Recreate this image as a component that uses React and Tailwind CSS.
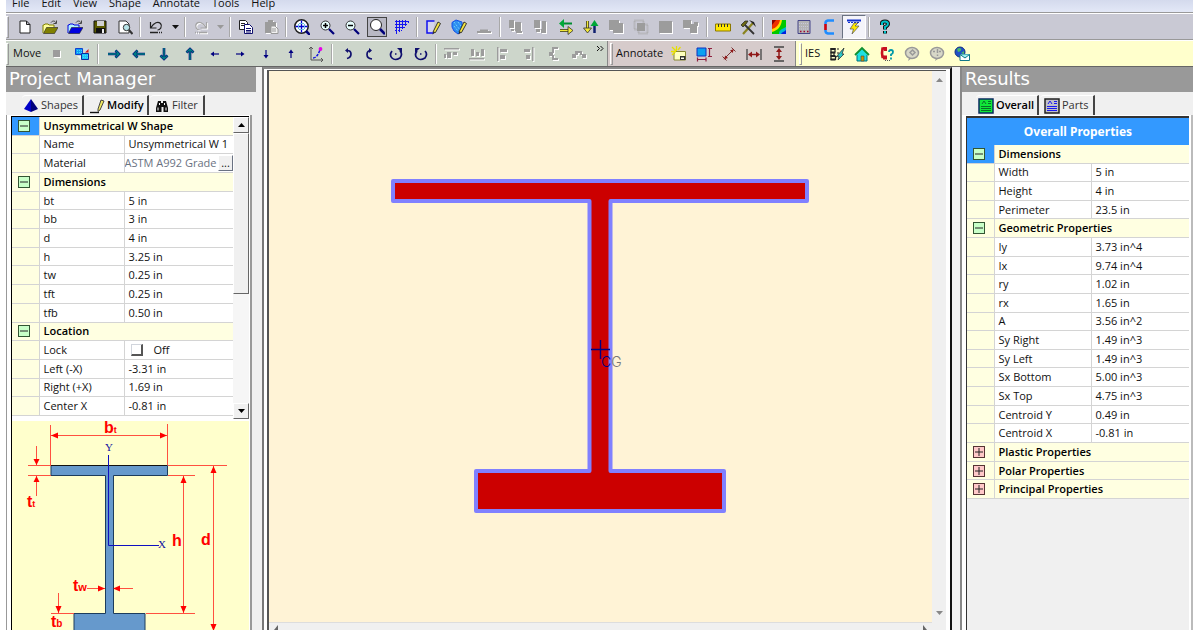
import { useState } from "react";
import clsx from "clsx";

const MENUS = ["File", "Edit", "View", "Shape", "Annotate", "Tools", "Help"];

// Property grid data, grouped by section
const SHAPE_SECTIONS = [
  {
    title: "Unsymmetrical W Shape",
    open: true,
    rows: [
      { label: "Name", value: "Unsymmetrical W 1" },
      { label: "Material", value: "ASTM A992 Grade", type: "picker" },
    ],
  },
  {
    title: "Dimensions",
    open: true,
    rows: [
      { label: "bt", value: "5 in" },
      { label: "bb", value: "3 in" },
      { label: "d", value: "4 in" },
      { label: "h", value: "3.25 in" },
      { label: "tw", value: "0.25 in" },
      { label: "tft", value: "0.25 in" },
      { label: "tfb", value: "0.50 in" },
    ],
  },
  {
    title: "Location",
    open: true,
    rows: [
      { label: "Lock", value: "Off", type: "check" },
      { label: "Left (-X)", value: "-3.31 in" },
      { label: "Right (+X)", value: "1.69 in" },
      { label: "Center X", value: "-0.81 in" },
    ],
  },
];

const RESULT_SECTIONS = [
  {
    title: "Dimensions",
    open: true,
    rows: [
      { label: "Width", value: "5 in" },
      { label: "Height", value: "4 in" },
      { label: "Perimeter", value: "23.5 in" },
    ],
  },
  {
    title: "Geometric Properties",
    open: true,
    rows: [
      { label: "Iy", value: "3.73 in^4" },
      { label: "Ix", value: "9.74 in^4" },
      { label: "ry", value: "1.02 in" },
      { label: "rx", value: "1.65 in" },
      { label: "A", value: "3.56 in^2" },
      { label: "Sy Right", value: "1.49 in^3" },
      { label: "Sy Left", value: "1.49 in^3" },
      { label: "Sx Bottom", value: "5.00 in^3" },
      { label: "Sx Top", value: "4.75 in^3" },
      { label: "Centroid Y", value: "0.49 in" },
      { label: "Centroid X", value: "-0.81 in" },
    ],
  },
  { title: "Plastic Properties", open: false, rows: [] },
  { title: "Polar Properties", open: false, rows: [] },
  { title: "Principal Properties", open: false, rows: [] },
];

const folder = (dark, light) => (
  <>
    <path d="M1 14V6h1l1-1h3l1 1h5v2" fill={light} stroke={dark} />
    <path d="M1.5 14.5 4.5 8.5H16L12.5 14.5z" fill={dark} stroke="#222" strokeWidth=".6" />
    <path d="M9 3.5c1.5-2 4-2 5 .5M14.5 1.5v3h-3" stroke="#444" fill="none" />
  </>
);

const lens = (
  <>
    <circle cx="6.5" cy="6.5" r="4.500" fill="#e8ffff" stroke="#333" />
    <path d="m10 10 5 5" stroke="#00007a" strokeWidth="2.200" />
  </>
);

const pencil = (
  <>
    <path d="m8 13 5-10 2.5 1.5-5 9z" fill="#f5e642" stroke="#222" strokeWidth=".9" />
    <path d="m8 13-.5 2.5L10 13.8z" fill="#222" />
  </>
);

// Thick arrow pointing right, rotated for the other directions
const bigArrow = (angle) => (
  <g transform={`rotate(${angle} 8 8)`}>
    <path d="M2 8h11M9.500 4.500 13 8l-3.500 3.500" stroke="#000080" strokeWidth="2.600" fill="none" />
    <path d="M2 8h11M9.500 4.500 13 8l-3.500 3.500" stroke="#008080" strokeWidth="1.400" fill="none" />
  </g>
);

const smallArrow = (angle) => (
  <g transform={`rotate(${angle} 8 8)`}>
    <path d="M4 8h6" stroke="#000080" strokeWidth="1.2" />
    <path d="m9 5.500 3.500 2.500L9 10.500z" fill="#000080" />
  </g>
);

// Disabled glyphs are a grey shape over a white one shifted by a pixel
const disabled = (d) => (
  <>
    <path d={d} fill="#fff" transform="translate(1 1)" />
    <path d={d} fill="#9c9c9c" />
  </>
);

const undoShape = (color) => (
  <>
    <path d="M2.5 3v6h6M3 8.5C6 3.5 10 2 12.5 4.5c2.5 3-.5 6.500-3 6.500" fill="none" stroke={color} strokeWidth="1.2" />
    <path d="M2 13.5h8" stroke={color} strokeWidth="1.5" />
    <path d="M11 13.5h4" stroke={color} strokeWidth="1.5" strokeDasharray="1 1" />
  </>
);

const clock = (d, head) => (
  <>
    <path d={d} fill="none" stroke="#10106e" strokeWidth="1.700" />
    <path d={head} fill="#10106e" />
  </>
);

const ICONS = {
  new: <path d="M3 2h6.500L13 5.500V14H3zM9.500 2v3.500H13" fill="#fff" stroke="#222" />,
  open: folder("#808000", "#ffff99"),
  openBlue: folder("#0000e0", "#b0f0ff"),
  save: (
    <>
      <path d="M2 2h12v12H2z" fill="#5c5c00" stroke="#111" />
      <path d="M5 2h7v5H5z" fill="#d2d2d2" />
      <path d="M4 9h9v5H4z" fill="#111" />
      <path d="M10 10h2v4h-2z" fill="#eee" />
    </>
  ),
  preview: (
    <>
      <path d="M2 2h7l3 3v9H2z" fill="#fff" stroke="#333" />
      <circle cx="9.5" cy="8.5" r="3.200" fill="#b8e4e8" stroke="#333" />
      <path d="m12 11 3.500 4" stroke="#333" strokeWidth="2" />
    </>
  ),
  undo: undoShape("#222"),
  redo: (
    <>
      <g transform="translate(17 1) scale(-1 1)">{undoShape("#fff")}</g>
      <g transform="translate(16 0) scale(-1 1)">{undoShape("#a4a4a4")}</g>
    </>
  ),
  copy: (
    <>
      <path d="M1.500 1.500h6l2 2v7h-8z" fill="#fff" stroke="#222" />
      <path d="M3 4.500h4M3 6.500h4" stroke="#222" />
      <path d="M6.500 5.500h5l3 3v6h-8z" fill="#fff" stroke="#10106e" />
      <path d="M8 9.500h5M8 11.500h5M8 13h5" stroke="#10106e" />
    </>
  ),
  paste: (
    <>
      {disabled("M2 3h3V1h5v2h3v4H8v7H2z")}
      <path d="M8 7h4l3 3v4.500H8z" fill="#f2f2f2" stroke="#999" />
      <path d="M9 10h4M9 12h4" stroke="#999" />
    </>
  ),
  zoomFit: (
    <>
      <circle cx="7.5" cy="7.5" r="6.700" fill="#fff" stroke="#222" strokeWidth="1.600" />
      <path d="M1.500 7.500h12M7.500 1.500v12" stroke="#0000d0" strokeWidth="1.300" />
      <path d="M4.500 5v5M10.500 5v5M5 4.500h5M5 10.500h5" stroke="#6bbbe0" />
      <path d="m12 12 4 4" stroke="#00007a" strokeWidth="2.500" />
    </>
  ),
  zoomIn: (
    <>
      {lens}
      <path d="M4 6.500h5M6.500 4v5" stroke="#000" strokeWidth="1.500" />
    </>
  ),
  zoomOut: (
    <>
      {lens}
      <path d="M4 6.500h5" stroke="#000" strokeWidth="1.500" />
    </>
  ),
  zoomBox: (
    <>
      <circle cx="7" cy="6" r="5.500" fill="#fff" stroke="#222" />
      <path d="m11 10 5 5" stroke="#00007a" strokeWidth="2.600" />
    </>
  ),
  grid: (
    <>
      <path d="M1 2.500h14M1 5.500h12M1 8.500h10M2.500 1v14M5.500 1v12M8.500 1v9M11.500 1v6" stroke="#1414f0" />
      <path d="M1 11.500h7M14.500 2v3" stroke="#1414f0" strokeDasharray="2 1" />
    </>
  ),
  sketch: (
    <>
      <path d="M9.500 2H2v12h6" fill="#d4d4ee" stroke="#1010f0" strokeWidth="1.500" />
      {pencil}
    </>
  ),
  solid: (
    <>
      <path d="M1 3.500 5 1l6 2v8l-4 4-4-3-2-4z" fill="#2c8df0" stroke="#1450e8" />
      <path d="m3 3 6 8M3 7l4 5M7 3l3 4" stroke="#7fe0ff" strokeDasharray="1 1" />
      {pencil}
    </>
  ),
  plate: disabled("M1 12h14v2H1zM4 10.500h8V12H4z"),
  bringFront: disabled("M1 1h5v8H1zM7 3h6v9H7zM3 10h3v2H3zM8 12h6v2H8z"),
  sendBack: disabled("M1 1h6v8H1zM9 2h4v12H8v-4h1zM3 10h4v3H3z"),
  flipH: (
    <>
      <path d="M14 4.500H5" stroke="#008c30" strokeWidth="2" />
      <path d="M6 0v9L1 4.500z" fill="#00a838" />
      <path d="M2 11.500h9" stroke="#222" strokeWidth="3" />
      <path d="M2 11.500h9" stroke="#f2e838" strokeWidth="1.600" />
      <path d="M10 7.500v8l5-4z" fill="#f2e838" stroke="#333" strokeWidth=".8" />
    </>
  ),
  flipV: (
    <>
      <path d="M4.500 2v8" stroke="#222" strokeWidth="3" />
      <path d="M4.500 2v8" stroke="#f2e838" strokeWidth="1.600" />
      <path d="M.5 9h8l-4 5z" fill="#f2e838" stroke="#333" strokeWidth=".8" />
      <path d="M11.500 14V6" stroke="#102070" strokeWidth="2.500" />
      <path d="M7.500 7h8l-4-6z" fill="#00a838" />
    </>
  ),
  union: disabled("M1 1h10v3h4v10H5v-3H1z"),
  intersect: (
    <>
      <path d="M1.500 1.500h9v9h-9zM5.500 5.500h9v9h-9z" fill="none" stroke="#a8a8a8" strokeWidth="2" strokeDasharray="1 1" />
      <path d="M4 4h8v8H4z" fill="#9c9c9c" />
    </>
  ),
  subtract: disabled("M1 2h13v12H1z"),
  split: disabled("M0 1h8v4h3V3h4v4h-1v7H7V9H0z"),
  ruler: (
    <>
      <path d="M.5 5h15v7H.5z" fill="#ffe800" stroke="#8c7800" />
      <path d="M3.500 5v3M6.500 5v3M9.500 5v3M12.500 5v3" stroke="#333" />
    </>
  ),
  tools: (
    <>
      <path d="m3 15 10-11" stroke="#8a8420" strokeWidth="2.200" />
      <path d="m5 6 9 9" stroke="#333" strokeWidth="1.800" />
      <path d="M1 6 5 2h3L6 5 3 8z" fill="#6c6814" stroke="#222" strokeWidth=".7" />
      <path d="m9 1 5 2 2 5-2-2-3-3z" fill="#222" />
    </>
  ),
  rainbow: (
    <>
      <path d="M1 1h14v14H1z" fill="#00c800" />
      <path d="M1 1h10C10 8 7 11 1 13z" fill="#ffe000" />
      <path d="M1 1h8C8 6 5 9 1 10z" fill="#f03000" />
      <path d="M1 1h4L1 6z" fill="#8c0000" />
      <path d="M15 8v7H8c0-4 3-5 7-7z" fill="#00b8d8" />
      <path d="M15 11v4h-5c1-2 3-2 5-4z" fill="#0020e0" />
    </>
  ),
  dotted: (
    <>
      <path d="M2 1.500h12v13H2z" fill="#b4b4b4" stroke="#444488" />
      <path d="M3 4.500h10M3 7.500h10M3 10h10" stroke="#c8c8dc" strokeDasharray="1 1" />
      <path d="M4 12.500h9" stroke="#a00030" strokeWidth="1.500" strokeDasharray="1.500 2" />
    </>
  ),
  channel: (
    <>
      <path d="M13 1.500H7Q4.500 2 4.500 4v8q0 2 2.500 2.500h6" fill="none" stroke="#1e8cff" strokeWidth="2.500" />
      <path d="M4.500 5v6" stroke="#e00000" strokeWidth="2.500" />
    </>
  ),
  flash: (
    <>
      <path d="M1 1.500h14" stroke="#1030d0" strokeWidth="2" />
      <path d="M2 3.500h12" stroke="#1030d0" strokeDasharray="2 1" />
      <path d="M8 4h4l-3 3h4l-7 8 1.500-5H4z" fill="#ffe800" stroke="#555" strokeWidth=".7" />
    </>
  ),
  help: (
    <>
      <path d="M5 6V4q0-1.500 3-1.500T11 5q0 1.500-3 3v2.500M8 12v2.500" fill="none" stroke="#111" strokeWidth="4" />
      <path d="M5 6V4q0-1.500 3-1.500T11 5q0 1.500-3 3v2.500M8 12v2.500" fill="none" stroke="#00c0c8" strokeWidth="2" />
    </>
  ),
  stop: disabled("M4 4h7v7H4z"),
  copyShape: (
    <>
      <path d="M1.500 2.500h7v6h-7z" fill="#0d9cf5" stroke="#1040d0" />
      <path d="M7.500 7.500h7v6h-7z" fill="#18c4f5" stroke="#0d2ca0" />
      <path d="M3 4.500h5M3 6.500h5M9 9.500h5M9 11.500h5" stroke="#40d8ff" strokeDasharray="1 1" />
      <path d="M10 2h4v4h-4z" fill="#c8d8e8" />
      <path d="M11 6.500 14.500 3v3.500z" fill="#d81818" />
      <path d="M3 10h4v4z" fill="#f4f4f4" />
    </>
  ),
  right: bigArrow(0),
  left: bigArrow(180),
  down: bigArrow(90),
  up: bigArrow(270),
  nudgeLeft: smallArrow(180),
  nudgeRight: smallArrow(0),
  nudgeDown: smallArrow(90),
  nudgeUp: smallArrow(270),
  moveTo: (
    <>
      <path d="M3 1v13h12M1 3l2-2 2 2M13 12l2 2-2 2" fill="none" stroke="#555" />
      <path d="M5 12q4 0 7-8" fill="none" stroke="#1414e0" strokeWidth="1.500" strokeDasharray="3 1" />
      <circle cx="12.5" cy="3" r="1.900" fill="#e800e8" />
    </>
  ),
  rotateA: clock("M8 4.500q4 0 4 3.500t-4 4.500", "M9 2 6 4.500 9 7z"),
  rotateB: clock("M7 4.500q-4 0-4 4T8 13", "M5 2l3 2.500L5 7z"),
  rotateC: clock("M4 5q-3 4 0 7t8 0q3-4 0-7M7 8h1.500", "M9 2h5v5z"),
  rotateD: clock("M4 5q-3 4 0 7t8 0q3-4 0-7M7 8h1.500", "M7 2H2v5z"),
  alignTop: disabled("M0 2h15v1.500H0zM3 6h4v6H3zM9 6h4v3H9zM0 8h2v4H0z"),
  alignBottom: disabled("M0 12h15v1.500H0zM2 3h3v7H2zM7 6h3v4H7zM12 3h3v7h-3z"),
  alignLeft: disabled("M2 1h1.500v14H2zM5 3h7v3H5zM5 9h5v4H5z"),
  alignRight: disabled("M12 1h1.500v14H12zM4 3h6v3H4zM6 9h4v4H6z"),
  centerH: disabled("M6 1h6v2H8v4H7v2h1v3h4v2H6v-4H3V6h3z"),
  centerV: disabled("M1 8h3V5h7v3h4v4h-4V9H9V7H7v2H5v3H1z"),
  note: (
    <>
      <path d="M4 5.500h10.500v8.500H3V8z" fill="#ffffc0" stroke="#888830" />
      <path d="M9 10h5.500v4H9z" fill="#333" />
      <path d="M10 11.500h3v1.500h-3z" fill="#ffe" />
      <path d="M1 1l4 4M5.500 0v5M0 5.500h5M1 9l3-3M9.500 1 7 4" stroke="#e8e000" strokeWidth="1.300" />
    </>
  ),
  boxDims: (
    <>
      <path d="M1 2h9v8H1z" fill="#0ca0f0" stroke="#1030c0" />
      <path d="M13.500 3v7M12 2.500h4M12 10.500h4M1 13.500h9M1.500 11.500v4M10 11.500v4" stroke="#902040" strokeWidth="1.200" />
    </>
  ),
  dimAligned: (
    <>
      <path d="m3 13 9-9M10.500 1.500l4 4M1.500 10.500l4 4" stroke="#773333" />
      <path d="m2.500 13.500 2-4 2.500 2.500zM13 3 9 4.500 11.500 7z" fill="#901818" />
    </>
  ),
  dimH: (
    <>
      <path d="M1 3v11M15 3v11" stroke="#444" strokeWidth="1.300" />
      <path d="M4 8.500h8" stroke="#901818" strokeWidth="1.500" />
      <path d="M2 8.500 6 5.500v6zM14 8.500l-4-3v6z" fill="#901818" />
    </>
  ),
  dimV: (
    <>
      <path d="M3 1h10M3 15h10" stroke="#444" strokeWidth="1.300" />
      <path d="M8 4v8" stroke="#901818" strokeWidth="1.500" />
      <path d="M8 2 5 6h6zM8 14l-3-4h6z" fill="#901818" />
    </>
  ),
  iesLogo: (
    <>
      <path d="M1.500 3h5M1.500 6.500h5M1.500 10h5M1.500 13.500h5" stroke="#222" strokeWidth="1.800" />
      <path d="M2 2v12M6 2v4M5 7v3M6.500 10v4M8 3h2M8 7h2" stroke="#222" strokeWidth="1.200" />
      <path d="m7 11 8-9-2 6h2l-6 6 1-4z" fill="#30c8c8" stroke="#222" strokeWidth=".7" />
    </>
  ),
  home: (
    <>
      <path d="M3 8h10v7H3z" fill="#20e0e0" stroke="#00707c" />
      <path d="M1 9 8 2l7 7" fill="#20e0e0" stroke="#109030" strokeWidth="1.800" />
      <path d="M7 10h3v5H7z" fill="#c89800" stroke="#444" strokeWidth=".6" />
    </>
  ),
  phone: (
    <>
      <path d="M5.500 2.500H3.500Q2.500 7 3.500 11h2" fill="none" stroke="#c81020" strokeWidth="2.600" />
      <path d="M4 1h4v4H5zM4 9.500h4v4H4z" fill="#c81020" />
      <path d="M6 14.500h5" stroke="#555" strokeDasharray="1 1" />
      <path d="M10 6q0-2 2-2t2 2-2 2.500V10M12 11.500v2" fill="none" stroke="#0098a8" strokeWidth="1.800" />
    </>
  ),
  chatA: (
    <>
      <ellipse cx="8" cy="7" rx="6.500" ry="5.500" fill="#d8d8c8" stroke="#999" strokeWidth="1.500" />
      <path d="m5 12-1 3 4-3" fill="#999" />
      <path d="M8.500 4 11 6.500 8.500 9 6 6.500z" fill="none" stroke="#999" strokeWidth="1.500" />
    </>
  ),
  chatB: (
    <>
      <ellipse cx="8" cy="7" rx="6.500" ry="5.500" fill="#d8d8c8" stroke="#999" strokeWidth="1.500" />
      <path d="m7 12-1 3 4-3" fill="#999" />
      <path d="M8.500 3v4M8.500 8.500V10M4 5.500h2M10 5.500h2" stroke="#999" strokeWidth="1.500" />
    </>
  ),
  mailWeb: (
    <>
      <circle cx="6" cy="6" r="5" fill="#2050c8" stroke="#103080" />
      <path d="M3 3q3-2 4 0t-3 3zM7 7l3-2v3z" fill="#48b868" />
      <path d="M6 8.500h9.500v6H6z" fill="#fff" stroke="#107888" />
      <path d="m6 8.500 5 3.500 4.500-3.500" fill="#a0f0f0" stroke="#107888" />
    </>
  ),
  pyramid: (
    <>
      <path d="M8 1 1 11l7 3z" fill="#0000c8" />
      <path d="m8 1 7 10-7 3z" fill="#00007c" />
    </>
  ),
  modify: (
    <>
      <path d="m9 11 3-9 3 1-4 9-2 1.500z" fill="#f0e860" stroke="#333" strokeWidth=".9" />
      <path d="M1 14.500h9" stroke="#111" strokeWidth="1.400" />
    </>
  ),
  binoculars: (
    <>
      <path d="M4 3h3v2h2V3h3l2 7v4H9.500V9h-2v5H2v-4z" fill="#111" />
      <path d="M4 9.500v3M12 9.500v3M5.500 5v2M10.500 5v2" stroke="#fff" />
    </>
  ),
  reportGreen: (
    <>
      <path d="M1 1h14v14H1z" fill="#10e838" stroke="#0a2a60" strokeWidth="1.500" />
      <path d="M4 6l2-3 2 3M10 3.500h3M10 5.500h3M3 8.500h10M3 10.500h10M3 12.500h10" fill="none" stroke="#087028" />
    </>
  ),
  reportBlue: (
    <>
      <path d="M1 1h14v14H1z" fill="#c0c0c8" stroke="#222" strokeWidth="1.500" />
      <path d="M4 6l2-3 2 3M10 3.500h3M10 5.500h3M3 8.500h10M3 10.500h10M3 12.500h10" fill="none" stroke="#1818f0" />
    </>
  ),
};

function Icon({ name }) {
  return (
    <svg viewBox="0 0 16 16" className="size-4 shrink-0" fill="none" aria-hidden="true">
      {ICONS[name]}
    </svg>
  );
}

function ToolGroup({ icons, className, active, boxed }) {
  return (
    <div className={clsx("flex shrink-0", className)}>
      {icons.map((name) => (
        <button
          key={name}
          type="button"
          aria-label={name}
          className="flex h-6 flex-1 items-center justify-center"
        >
          <span
            className={clsx(
              "flex items-center justify-center",
              active === name && "h-6 w-6 border border-t-gray-500 border-l-gray-500 border-r-white border-b-white bg-[#f4f4fa]",
              boxed === name && "h-5 w-5 border border-[#444] bg-[#b8b8c4]"
            )}
          >
            <Icon name={name} />
          </span>
        </button>
      ))}
    </div>
  );
}

function Divider() {
  return (
    <div className="flex h-5 w-[6px] shrink-0 justify-center">
      <div className="w-[2px] border-l border-[#a8a8a8] bg-white" />
    </div>
  );
}

function Grip({ tall }) {
  return (
    <div
      className={clsx(
        "w-[3px] shrink-0 border border-t-white border-l-white border-r-[#999] border-b-[#999]",
        tall ? "h-[22px]" : "h-5"
      )}
    />
  );
}

function Caret({ muted }) {
  return (
    <button type="button" aria-label="More" className="flex h-6 w-[14px] shrink-0 items-center justify-center">
      <svg viewBox="0 0 7 4" className="h-1 w-[7px]">
        <path d="M0 0h7L3.500 4z" fill={muted ? "#999" : "#111"} />
      </svg>
    </button>
  );
}

function Toolbars() {
  return (
    <>
      <div className="flex h-[27px] items-center border-t border-b border-t-white border-b-[#999] bg-[#c9c9d4]">
        <div className="w-[6px] shrink-0">
          <Grip tall />
        </div>
        <ToolGroup className="w-[125px]" icons={["new", "open", "openBlue", "save", "preview"]} />
        <Divider />
        <ToolGroup className="w-[25px]" icons={["undo"]} />
        <Caret />
        <Divider />
        <ToolGroup className="w-[25px]" icons={["redo"]} />
        <Caret muted />
        <Divider />
        <ToolGroup className="w-[50px]" icons={["copy", "paste"]} />
        <Divider />
        <ToolGroup
          className="w-[125px]"
          icons={["zoomFit", "zoomIn", "zoomOut", "zoomBox", "grid"]}
          boxed="zoomBox"
        />
        <Divider />
        <ToolGroup className="w-[77px]" icons={["sketch", "solid", "plate"]} />
        <Divider />
        <ToolGroup
          className="w-[201px]"
          icons={["bringFront", "sendBack", "flipH", "flipV", "union", "intersect", "subtract", "split"]}
        />
        <Divider />
        <ToolGroup className="w-[50px]" icons={["ruler", "tools"]} />
        <Divider />
        <ToolGroup
          className="w-[100px]"
          icons={["rainbow", "dotted", "channel", "flash"]}
          active="flash"
        />
        <Divider />
        <ToolGroup className="w-[25px]" icons={["help"]} />
      </div>

      <div className="flex h-[27px] border-t border-b border-t-white border-b-[#666] text-[11px]">
        <div className="flex w-[602px] shrink-0 items-center border-r border-[#888] bg-[#cdd6cb]">
          <Grip tall />
          <span className="w-[35px] shrink-0 pl-1">Move</span>
          <ToolGroup className="w-[51px]" icons={["stop", "copyShape"]} />
          <Divider />
          <ToolGroup
            className="w-[228px]"
            icons={["right", "left", "down", "up", "nudgeLeft", "nudgeRight", "nudgeDown", "nudgeUp", "moveTo"]}
          />
          <Divider />
          <ToolGroup className="w-[98px]" icons={["rotateA", "rotateB", "rotateC", "rotateD"]} />
          <Divider />
          <ToolGroup
            className="w-[153px]"
            icons={["alignTop", "alignBottom", "alignLeft", "alignRight", "centerH", "centerV"]}
          />
          <button type="button" aria-label="More move tools" className="flex h-6 flex-1 items-start justify-center pt-1">
            <svg viewBox="0 0 8 6" className="h-[6px] w-2">
              <path d="m1 0 2.500 2.500L1 5M4.500 0 7 2.500 4.500 5" fill="none" stroke="#111" />
            </svg>
          </button>
        </div>
        <div className="flex w-[188px] shrink-0 items-center border-r border-[#888] bg-[#d6cbcb] pl-[2px]">
          <Grip tall />
          <span className="w-[53px] shrink-0 pl-[3px]">Annotate</span>
          <ToolGroup className="w-[126px]" icons={["note", "boxDims", "dimAligned", "dimH", "dimV"]} />
        </div>
        <div className="flex flex-1 items-center bg-[#ffffcc] pl-[3px]">
          <Grip tall />
          <span className="w-[22px] shrink-0 pl-[3px]">IES</span>
          <ToolGroup className="w-[151px]" icons={["iesLogo", "home", "phone", "chatA", "chatB", "mailWeb"]} />
        </div>
      </div>
    </>
  );
}

function ToggleBox({ open, onClick, title }) {
  return (
    <button
      type="button"
      onClick={onClick}
      aria-label={title}
      aria-expanded={open}
      className={clsx(
        "flex size-3 items-center justify-center border",
        open ? "border-[#335533] bg-[#c8ffc8]" : "border-[#553333] bg-[#ffc8c8]"
      )}
    >
      <svg viewBox="0 0 8 8" className="size-2 shrink-0">
        <path d={open ? "M0 4h8" : "M0 4h8M4 0v8"} stroke="#222" strokeWidth="1" />
      </svg>
    </button>
  );
}

function PropertyValue({ row, id }) {
  if (row.type === "picker") {
    return (
      <div className="flex items-center justify-between">
        <span className="whitespace-nowrap text-gray-500">{row.value}</span>
        <button
          type="button"
          aria-label="Choose material"
          className="h-4 w-[15px] shrink-0 border border-t-white border-l-white border-r-gray-500 border-b-gray-500 bg-[#f0f0f0] leading-[10px]"
        >
          ...
        </button>
      </div>
    );
  }
  if (row.type === "check") {
    return (
      <div className="flex items-center gap-[11px] pl-[2px]">
        <input
          id={id}
          type="checkbox"
          className="size-3 appearance-none border border-t-gray-300 border-l-gray-300 border-r-2 border-b-2 border-r-[#555] border-b-[#555] bg-white checked:bg-blue-500"
        />
        <span>{row.value}</span>
      </div>
    );
  }
  return row.value;
}

function PropertyGrid({ sections, className, labelWidth }) {
  const [open, setOpen] = useState(sections.map((s) => s.open));

  const toggle = (index) => {
    setOpen(open.map((value, i) => (i === index ? !value : value)));
  };

  return (
    <table className={clsx("w-full table-fixed border-collapse bg-white text-[11px] leading-4", className)}>
      <colgroup>
        <col className="w-[27px]" />
        <col className={labelWidth} />
        <col />
      </colgroup>
      {sections.map((section, sIndex) => (
        <tbody key={section.title}>
          <tr className="border-b border-[#d4d4d4] bg-[#ffffe1]">
            <td className={clsx("border-r border-[#d4d4d4] p-0 pl-[6px]", sIndex === 0 && "bg-[#3399ff]")}>
              <ToggleBox open={open[sIndex]} onClick={() => toggle(sIndex)} title={section.title} />
            </td>
            <th colSpan={2} className="p-0 pl-1 text-left font-semibold text-black">
              {section.title}
            </th>
          </tr>
          {open[sIndex] &&
            section.rows.map((row) => (
              <tr key={row.label} className="border-b border-[#d4d4d4]">
                <td className="border-r border-[#d4d4d4] bg-[#ffffe1] p-0" />
                <td className="border-r border-[#d4d4d4] p-0 pl-1">
                  {row.type === "check" ? <label htmlFor={`prop-${row.label}`}>{row.label}</label> : row.label}
                </td>
                <td className={clsx("overflow-hidden p-0 whitespace-nowrap", row.type === "picker" ? "pl-0" : "pl-1")}>
                  <PropertyValue row={row} id={`prop-${row.label}`} />
                </td>
              </tr>
            ))}
        </tbody>
      ))}
    </table>
  );
}

function Tabs({ tabs, active, onChange }) {
  return (
    <div role="tablist" className="flex gap-px text-[11px]">
      {tabs.map((tab) => (
        <button
          key={tab.name}
          type="button"
          role="tab"
          aria-selected={active === tab.name}
          onClick={() => onChange(tab.name)}
          className={clsx(
            "flex h-5 items-center gap-[2px] rounded-tl border-t border-r-2 border-t-white border-r-[#444] whitespace-nowrap",
            tab.className,
            active === tab.name ? "font-semibold text-black" : "text-[#333]"
          )}
        >
          <Icon name={tab.icon} />
          {tab.name}
        </button>
      ))}
    </div>
  );
}

function PanelTitle({ children }) {
  return (
    <h2 className="h-[25px] bg-[#999] pl-[3px] font-['DejaVu_Sans'] text-[18px] leading-6 text-white">
      {children}
    </h2>
  );
}

function ScrollButton({ up }) {
  return (
    <button
      type="button"
      aria-label={up ? "Scroll up" : "Scroll down"}
      className="flex h-4 w-full shrink-0 items-center justify-center border border-t-white border-l-white border-r-[#666] border-b-[#666] bg-[#f0f0f0]"
    >
      <svg viewBox="0 0 7 4" className="h-1 w-[7px]">
        <path d={up ? "M0 4h7L3.500 0z" : "M0 0h7L3.500 4z"} fill="#000" />
      </svg>
    </button>
  );
}

// Dimension sketch shown under the property grid
function ShapeDiagram() {
  return (
    <svg viewBox="12 421 237 209" className="h-[209px] w-[237px]">
      <g fill="#6699cc" stroke="#1c3c5c">
        <path d="M51 465.500h116.500v10H113.500v138H145V640H74v-26.500h31.500v-138H51z" />
      </g>
      <path d="M51 465.500h116" stroke="#111" />
      <g stroke="#ff5040">
        <path d="M50.500 425v40M167.500 424v41M51 435.500h116M28 465.500h23M168 465.500h59M28 475.500h23M168 475.500h27" />
        <path d="M36.500 446v19M36.500 476v20M183.500 476v137M213.500 466v164M87 588.500h18M114 588.500h19" />
        <path d="M51 613.500h23M146 613.500h49M58.500 593v20" />
      </g>
      <g fill="#f00">
        <path d="m51 435.500 7-3v6zM167 435.500l-7-3v6zM36.500 465l-3-6h6zM36.500 476l-3 6h6z" />
        <path d="m183.500 476-3 7h6zM183.500 613l-3-7h6zM213.500 466l-3 7h6zM213.500 631l-3-7h6z" />
        <path d="m105 588.500-7-3v6zM113 588.500l7-3v6zM58.500 613l-3-7h6z" />
      </g>
      <path d="M108.500 455v90.500H159" fill="none" stroke="#1010c0" />
      <g className="font-['Liberation_Serif'] text-[11px]" fill="#1010a0">
        <text x="105" y="451">Y</text>
        <text x="158" y="548">X</text>
      </g>
      <g className="font-['Liberation_Sans'] text-[16px] font-bold" fill="#f00">
        <text x="104" y="433">b<tspan className="text-[9px]">t</tspan></text>
        <text x="27" y="507">t<tspan className="text-[9px]">t</tspan></text>
        <text x="172" y="546">h</text>
        <text x="201" y="545">d</text>
        <text x="73" y="591">t<tspan className="text-[11px]">w</tspan></text>
        <text x="51" y="627">t<tspan className="text-[10px]">b</tspan></text>
      </g>
    </svg>
  );
}

function ProjectManager() {
  const [tab, setTab] = useState("Modify");
  return (
    <aside className="flex w-[250px] shrink-0 flex-col">
      <PanelTitle>Project Manager</PanelTitle>
      <div className="pt-[3px] pl-4">
        <Tabs
          active={tab}
          onChange={setTab}
          tabs={[
            { name: "Shapes", icon: "pyramid", className: "w-[62px] pl-px" },
            { name: "Modify", icon: "modify", className: "w-[64px] pl-1" },
            { name: "Filter", icon: "binoculars", className: "w-[55px] pl-1" },
          ]}
        />
      </div>
      <div className="mr-1 flex flex-1 flex-col border-r-2 border-l border-[#999] bg-white pr-px pl-1 pt-px">
        <div className="flex flex-1 flex-col border-t border-l border-black">
          <div className="flex">
            <div className="min-w-0 flex-1 pb-[3px]">
              <PropertyGrid sections={SHAPE_SECTIONS} className="h-[299px]" labelWidth="w-[85px]" />
            </div>
            <div className="flex w-4 shrink-0 flex-col bg-[#f6f6f6]">
              <ScrollButton up />
              <div className="h-[161px] border border-t-white border-l-white border-r-[#666] border-b-[#666] bg-[#f0f0f0]" />
              <div className="flex-1" />
              <ScrollButton />
            </div>
          </div>
          <div className="mt-[2px] flex-1 overflow-hidden bg-[#ffffcc]">
            <ShapeDiagram />
          </div>
        </div>
      </div>
    </aside>
  );
}

function Canvas() {
  return (
    <main className="mr-2 ml-[6px] flex min-w-0 flex-1 border-t-2 border-r-2 border-l-2 border-t-[#888] border-r-[#111] border-l-[#777] bg-white pt-px pr-1 pl-[3px]">
      <div className="flex min-w-0 flex-1 flex-col border-t border-l-2 border-[#555] bg-[#f0f0f0]">
        <div className="flex min-h-0 flex-1">
          <div className="min-w-0 flex-1 bg-[#fff3d6]">
            <svg viewBox="269 71 663 551" className="h-full w-full">
              <path
                d="M393 181H807V201H610.500V471H724V511H476V471H589.500V201H393z"
                fill="#cc0000"
                stroke="#8080ff"
                strokeWidth="4"
                strokeLinejoin="round"
              />
              <path d="M591 349.500h19M600.500 340v19" stroke="#000080" strokeWidth="1.400" />
              <text x="601" y="367" className="font-['Inter'] text-[14px] font-light" fill="#000080">
                C<tspan fill="#777">G</tspan>
              </text>
            </svg>
          </div>
          <div className="flex w-[14px] shrink-0 flex-col items-center justify-between py-[7px]">
            <svg viewBox="0 0 7 4" className="h-1 w-[7px]">
              <path d="M0 4h7L3.500 0z" fill="#888" />
            </svg>
            <svg viewBox="0 0 7 4" className="h-1 w-[7px]">
              <path d="M0 0h7L3.500 4z" fill="#888" />
            </svg>
          </div>
        </div>
        <div className="mr-[14px] flex h-2 shrink-0 items-end justify-between overflow-hidden border-t border-[#ddd] px-[5px]">
          <svg viewBox="0 0 4 5" className="h-[5px] w-1">
            <path d="M4 0v5H0z" fill="#666" />
          </svg>
          <svg viewBox="0 0 4 5" className="h-[5px] w-1">
            <path d="M0 0v5h4z" fill="#666" />
          </svg>
        </div>
      </div>
    </main>
  );
}

function Results() {
  const [tab, setTab] = useState("Overall");
  return (
    <aside className="flex w-[233px] shrink-0 flex-col border-l-2 border-[#888]">
      <PanelTitle>Results</PanelTitle>
      <div className="pt-[3px] pl-[14px]">
        <Tabs
          active={tab}
          onChange={setTab}
          tabs={[
            { name: "Overall", icon: "reportGreen", className: "w-[63px] pl-[2px]" },
            { name: "Parts", icon: "reportBlue", className: "w-[55px] pl-1" },
          ]}
        />
      </div>
      <div className="flex flex-1 flex-col border-r-2 border-[#bbb] bg-white pt-px pr-[2px] pl-1">
        <div className="flex-1 border-t-2 border-l border-[#333] bg-[#f0f0f0]">
          <h3 className="h-[27px] bg-[#3399ff] text-center font-['Noto_Sans'] text-[12px] leading-[27px] font-bold text-white">
            Overall Properties
          </h3>
          <PropertyGrid sections={RESULT_SECTIONS} className="h-[354px]" labelWidth="w-[97px]" />
        </div>
      </div>
    </aside>
  );
}

export default function App() {
  return (
    <div className="h-screen overflow-hidden bg-white pr-[7px] pl-[6px] font-['Open_Sans',sans-serif] text-[#111]">
      <div className="flex h-full flex-col bg-[#f0f0f0]">
        <nav className="flex h-[13px] shrink-0 items-end gap-3 overflow-hidden border-b border-[#999] bg-linear-to-b from-[#d4daed] to-[#e3e8f7] pl-[6px] text-[11px] leading-4">
          {MENUS.map((menu) => (
            <button key={menu} type="button" className="mb-px h-4">
              {menu}
            </button>
          ))}
        </nav>
        <Toolbars />
        <div className="flex min-h-0 flex-1">
          <ProjectManager />
          <Canvas />
          <Results />
        </div>
      </div>
    </div>
  );
}
